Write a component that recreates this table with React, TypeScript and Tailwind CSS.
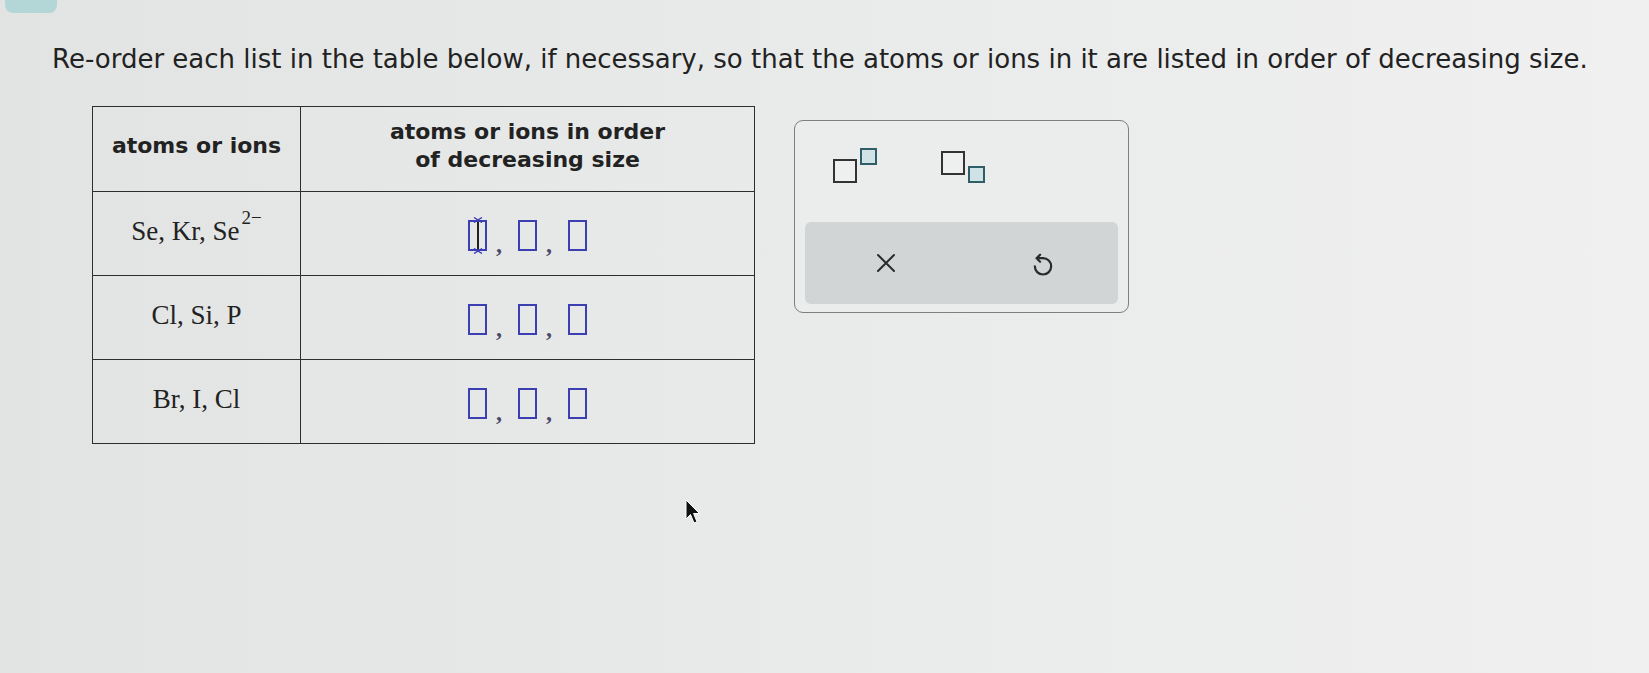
import React from "react"

const sans = { fontFamily: '"DejaVu Sans", Verdana, sans-serif' }
const serif = { fontFamily: '"Liberation Serif", "Times New Roman", serif' }

function Box({ focused = false }: { focused?: boolean }) {
  return (
    <span className="relative inline-flex justify-center w-[19px] h-[31px] border-[2.5px] border-[#3b3fb2]">
      {focused && (
        <>
          <span className="w-[2px] h-full bg-[#222]" />
          <svg className="absolute -top-[5px] left-1/2 -translate-x-1/2" width="10" height="6" viewBox="0 0 10 6" fill="none" stroke="#3b3fb2" strokeWidth="1.4">
            <path d="M1 0.5 L9 5.5 M9 0.5 L1 5.5" />
          </svg>
          <svg className="absolute -bottom-[5px] left-1/2 -translate-x-1/2" width="10" height="6" viewBox="0 0 10 6" fill="none" stroke="#3b3fb2" strokeWidth="1.4">
            <path d="M1 0.5 L9 5.5 M9 0.5 L1 5.5" />
          </svg>
        </>
      )}
    </span>
  )
}

function Answer({ first = false }: { first?: boolean }) {
  return (
    <div className="flex items-end justify-center" style={serif}>
      <Box focused={first} />
      <span className="w-[31px] pl-[9px] text-[24px] leading-none font-bold text-[#4a4a6a] translate-y-[5px]">,</span>
      <Box />
      <span className="w-[31px] pl-[9px] text-[24px] leading-none font-bold text-[#4a4a6a] translate-y-[5px]">,</span>
      <Box />
    </div>
  )
}

const rows = [
  { label: <>Se, Kr, Se<sup className="text-[19px] relative -top-[16px] ml-[2px]">2−</sup></>, first: true },
  { label: <>Cl, Si, P</>, first: false },
  { label: <>Br, I, Cl</>, first: false },
]

export default function App() {
  return (
    <div className="relative h-[673px] w-full overflow-hidden bg-gradient-to-r from-[#e2e4e3] via-[#e9eaea] to-[#f0f0f0] text-[#2b2b2b]">
      <div className="absolute left-[5px] -top-[10px] h-[23px] w-[52px] rounded-lg bg-[#b3d7d6]" />

      <div className="pl-[52px] pt-[43px]">
        <h1 className="text-[26px] leading-[32px] text-[#222]" style={sans}>
          Re-order each list in the table below, if necessary, so that the atoms or ions in it are listed in order of decreasing size.
        </h1>

        <div className="mt-[31px] ml-[40px] flex items-start gap-[39px]">
          <table className="border-collapse" style={sans}>
            <thead>
              <tr className="h-[85px]">
                <th className="w-[208px] border-[1.5px] border-[#2e2e2e] text-[22px] font-bold text-[#222] align-middle pb-[8px]">
                  atoms or ions
                </th>
                <th className="w-[454px] border-[1.5px] border-[#2e2e2e] text-[22px] font-bold leading-[28px] text-[#222] align-middle pb-[6px]">
                  atoms or ions in order
                  <br />
                  of decreasing size
                </th>
              </tr>
            </thead>
            <tbody>
              {rows.map((r, i) => (
                <tr key={i} className="h-[84px]">
                  <td className="border-[1.5px] border-[#2e2e2e] text-center text-[27px] text-[#222] align-middle pb-[4px]" style={serif}>
                    {r.label}
                  </td>
                  <td className="border-[1.5px] border-[#2e2e2e] align-middle pt-[4px]">
                    <Answer first={r.first} />
                  </td>
                </tr>
              ))}
            </tbody>
          </table>

          <div className="mt-[14px] w-[335px] rounded-[9px] border-[1.5px] border-[#7d7f80] bg-[#ebecec] px-[10px] pt-[27px] pb-[8px]">
            <div className="flex items-start gap-[64px] pl-[28px] h-[74px]">
              <div className="flex items-start gap-[3px]">
                <span className="mt-[11px] h-[24px] w-[24px] border-2 border-[#333] bg-[#eeefef]" />
                <span className="h-[17px] w-[17px] border-2 border-[#2f5d68] bg-[#cfe2e6]" />
              </div>
              <div className="flex items-start gap-[3px]">
                <span className="mt-[3px] h-[24px] w-[24px] border-2 border-[#333] bg-[#eeefef]" />
                <span className="mt-[18px] h-[17px] w-[17px] border-2 border-[#2f5d68] bg-[#cfe2e6]" />
              </div>
            </div>
            <div className="flex h-[82px] items-center justify-around rounded-[6px] bg-[#d2d5d6] px-[10px]">
              <svg width="24" height="24" viewBox="0 0 24 24" fill="none" stroke="#2b2b2b" strokeWidth="2" strokeLinecap="round" className="ml-[8px]">
                <path d="M4 4l16 16M20 4L4 20" />
              </svg>
              <svg width="28" height="28" viewBox="0 0 24 24" fill="none" stroke="#2b2b2b" strokeWidth="1.9" strokeLinecap="round" strokeLinejoin="round" className="ml-[30px] mt-[2px]">
                <path d="M12 7a7 7 0 1 1-7 7" />
                <path d="M12 7H6.5M6.5 7l3-3M6.5 7l3 3" />
              </svg>
            </div>
          </div>
        </div>
      </div>

      <svg className="absolute left-[685px] top-[499px]" width="16" height="26" viewBox="0 0 16 26">
        <path d="M1 1 L1 20 L5.5 15.5 L9 24 L12 22.8 L8.6 14.5 L14.5 14.5 Z" fill="#111" stroke="#fff" strokeWidth="1" />
      </svg>
    </div>
  )
}
